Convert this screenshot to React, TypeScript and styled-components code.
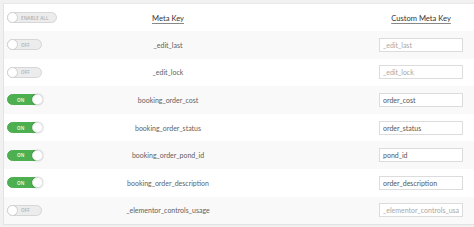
import React from 'react'
import styled, { createGlobalStyle } from 'styled-components'

const GlobalStyle = createGlobalStyle`
  html, body {
    margin: 0;
    padding: 0;
    background: #f1f1f1;
    overflow: hidden;
  }
  body {
    font-family: Lato, 'Open Sans', 'Liberation Sans', sans-serif;
  }
`

const Page = styled.div`
  padding: 3px 0 0 3px;
  width: 580px;
`

const Table = styled.div`
  display: grid;
  grid-template-columns: 60px 208px 298px;
  background: #fff;
  border-left: 1px solid #e3e3e3;
  border-top: 1px solid #e8e8e8;
  border-bottom: 1px solid #e3e3e3;
`

const Row = styled.div<{ striped?: boolean; tall?: boolean }>`
  display: contents;
  > div {
    height: ${(p) => (p.tall ? '27px' : '27.6px')};
    background: ${(p) => (p.striped ? '#f9f9f9' : '#fff')};
  }
`

const Cell = styled.div<{ align?: 'left' | 'center' }>`
  display: flex;
  align-items: center;
  justify-content: ${(p) => (p.align === 'left' ? 'flex-start' : 'center')};
  padding-left: ${(p) => (p.align === 'left' ? '3px' : '0')};
  font-size: 7px;
  color: #5f5f5f;
  white-space: nowrap;
`

const HeadLabel = styled.span`
  color: #333;
  font-size: 7.6px;
  text-decoration: underline;
  text-decoration-color: #888;
  text-underline-offset: 2px;
`

const Track = styled.span<{ on?: boolean; wide?: boolean }>`
  position: relative;
  display: inline-flex;
  align-items: center;
  box-sizing: border-box;
  width: ${(p) => (p.wide ? '50px' : '35px')};
  height: 11px;
  border-radius: 6px;
  background: ${(p) => (p.on ? '#4cb050' : '#ececec')};
  border: 1px solid ${(p) => (p.on ? '#4cb050' : '#d6d6d6')};
  padding: ${(p) => (p.on ? '0 0 0 9px' : '0 0 0 13px')};
  font-family: 'Open Sans', sans-serif;
  font-size: 4.6px;
  font-weight: 600;
  letter-spacing: 0.1px;
  color: ${(p) => (p.on ? '#fff' : '#b0b0b0')};
`

const Knob = styled.span<{ on?: boolean }>`
  position: absolute;
  top: -1px;
  ${(p) => (p.on ? 'right: -2px;' : 'left: -1px;')}
  width: 11px;
  height: 11px;
  box-sizing: border-box;
  border-radius: 50%;
  background: #fff;
  border: 1px solid ${(p) => (p.on ? '#e6e6e6' : '#cfcfcf')};
  box-shadow: ${(p) => (p.on ? '0 0 2px rgba(0,0,0,0.25)' : 'none')};
`

const Toggle = ({ on, label, wide }: { on?: boolean; label: string; wide?: boolean }) => (
  <Track on={on} wide={wide}>
    {label}
    <Knob on={on} />
  </Track>
)

const Input = styled.input`
  box-sizing: border-box;
  width: 84px;
  height: 14px;
  border: 1px solid #dcdcdc;
  background: #fff;
  padding: 0 3px;
  font-family: inherit;
  font-size: 7px;
  color: #555;
  outline: none;
  &::placeholder {
    color: #a8a8a8;
  }
`

const rows = [
  { key: '_edit_last', on: false, value: '' },
  { key: '_edit_lock', on: false, value: '' },
  { key: 'booking_order_cost', on: true, value: 'order_cost' },
  { key: 'booking_order_status', on: true, value: 'order_status' },
  { key: 'booking_order_pond_id', on: true, value: 'pond_id' },
  { key: 'booking_order_description', on: true, value: 'order_description' },
  { key: '_elementor_controls_usage', on: false, value: '' },
]

export default function App() {
  return (
    <Page>
      <GlobalStyle />
      <Table>
        <Row tall>
          <Cell align="left">
            <Toggle label="ENABLE ALL" wide />
          </Cell>
          <Cell>
            <HeadLabel>Meta Key</HeadLabel>
          </Cell>
          <Cell>
            <HeadLabel>Custom Meta Key</HeadLabel>
          </Cell>
        </Row>
        {rows.map((r, i) => (
          <Row key={r.key} striped={i % 2 === 0}>
            <Cell align="left">
              <Toggle on={r.on} label={r.on ? 'ON' : 'OFF'} />
            </Cell>
            <Cell>{r.key}</Cell>
            <Cell>
              <Input defaultValue={r.value} placeholder={r.key} />
            </Cell>
          </Row>
        ))}
      </Table>
    </Page>
  )
}
